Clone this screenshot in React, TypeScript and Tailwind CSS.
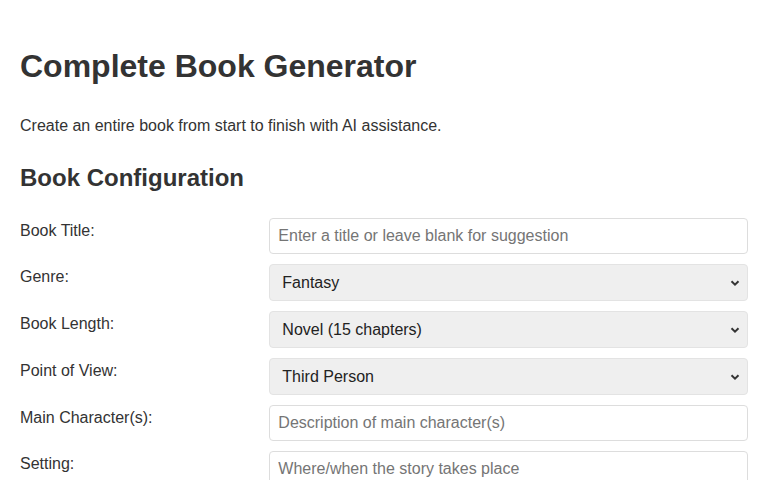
const font = { fontFamily: '"Liberation Sans", Arial, sans-serif' };

function Chevron() {
  return (
    <svg
      className="pointer-events-none absolute right-[8px] top-1/2 -translate-y-1/2"
      width="10"
      height="6"
      viewBox="0 0 10 6"
    >
      <path d="M1.5 1.2 L5 4.6 L8.5 1.2" fill="none" stroke="#333" strokeWidth="2" />
    </svg>
  );
}

function TextRow({ label, placeholder }: { label: string; placeholder: string }) {
  return (
    <div className="grid grid-cols-[1fr_2fr] gap-[10px] mb-[10px]">
      <label className="pt-[4px] text-[16px] leading-[18px] text-[#333]">{label}</label>
      <input
        type="text"
        placeholder={placeholder}
        className="h-[36px] w-full rounded-[4px] border border-[#ddd] bg-white px-[8px] text-[16px] text-[#333] placeholder:text-[#757575] outline-none"
      />
    </div>
  );
}

function SelectRow({ label, value, options }: { label: string; value: string; options: string[] }) {
  return (
    <div className="grid grid-cols-[1fr_2fr] gap-[10px] mb-[10px]">
      <label className="pt-[4px] text-[16px] leading-[18px] text-[#333]">{label}</label>
      <div className="relative">
        <select
          defaultValue={value}
          className="h-[37px] w-full appearance-none rounded-[4px] border border-[#e3e3e3] bg-[#efefef] pl-[12px] pr-[24px] text-[16px] text-[#222] outline-none"
        >
          {options.map((o) => (
            <option key={o}>{o}</option>
          ))}
        </select>
        <Chevron />
      </div>
    </div>
  );
}

export default function App() {
  return (
    <div className="min-h-screen bg-white px-[20px]" style={font}>
      <h1 className="pt-[48px] text-[32px] leading-[37px] font-bold text-[#333]">Complete Book Generator</h1>
      <p className="mt-[32px] text-[16px] leading-[18px] text-[#333]">
        Create an entire book from start to finish with AI assistance.
      </p>
      <h2 className="mt-[29px] text-[24px] leading-[28px] font-bold text-[#333]">Book Configuration</h2>

      <form className="mt-[26px]">
        <TextRow label="Book Title:" placeholder="Enter a title or leave blank for suggestion" />
        <SelectRow
          label="Genre:"
          value="Fantasy"
          options={['Fantasy', 'Science Fiction', 'Mystery', 'Romance', 'Thriller', 'Horror']}
        />
        <SelectRow
          label="Book Length:"
          value="Novel (15 chapters)"
          options={['Short Story (3 chapters)', 'Novella (8 chapters)', 'Novel (15 chapters)']}
        />
        <SelectRow
          label="Point of View:"
          value="Third Person"
          options={['First Person', 'Second Person', 'Third Person']}
        />
        <TextRow label="Main Character(s):" placeholder="Description of main character(s)" />
        <TextRow label="Setting:" placeholder="Where/when the story takes place" />
      </form>
    </div>
  );
}
